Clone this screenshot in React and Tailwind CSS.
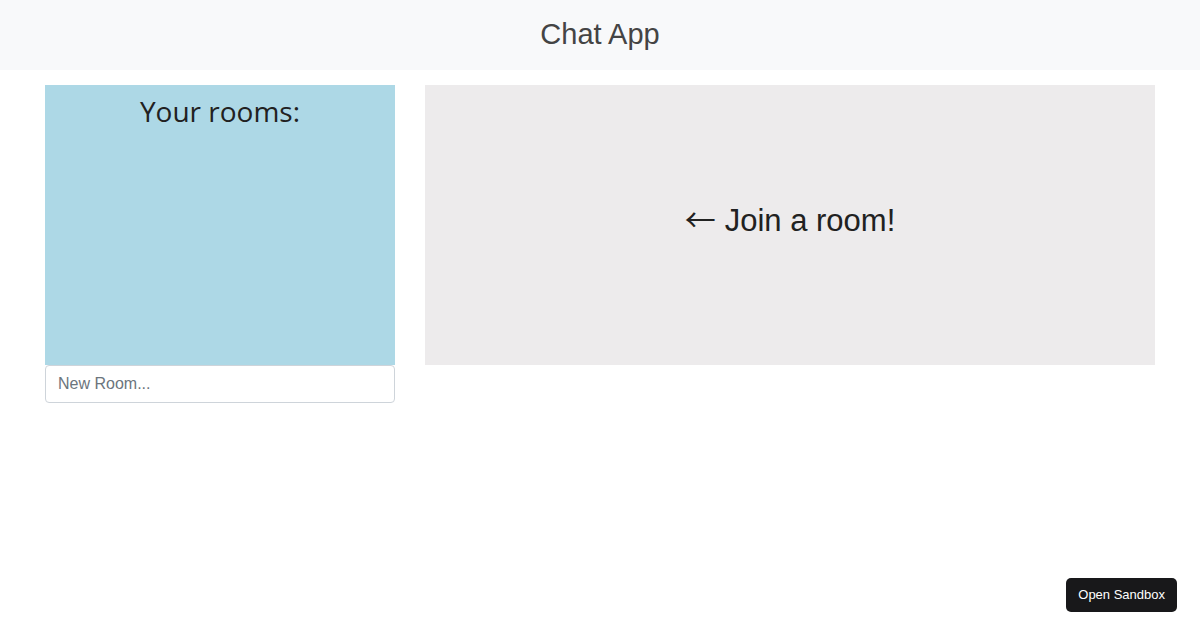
import React from "react";

const App = () => {
  return (
    <div className="min-h-[630px] bg-white font-['Liberation_Sans',Arial,sans-serif] text-[#212529]">
      <header className="h-[70px] bg-[#f8f9fa] flex items-center justify-center">
        <h1 className="text-[29px] leading-none text-[#444] pb-[2px]">Chat App</h1>
      </header>

      <main className="w-[1110px] mx-auto mt-[15px] flex gap-[30px]">
        {/* rooms column */}
        <div className="w-[350px] flex flex-col">
          <div className="h-[280px] bg-[#add8e6] pt-[8px]">
            <h2 className="text-center text-[28px] leading-[36px] text-[#212121] font-['Open_Sans',sans-serif]">
              Your rooms:
            </h2>
          </div>
          <input
            type="text"
            placeholder="New Room..."
            className="h-[38px] w-full border border-[#ced4da] rounded-[4px] px-3 text-base text-[#495057] placeholder:text-[#6c757d] outline-none"
          />
        </div>

        {/* chat area */}
        <div className="flex-1 h-[280px] bg-[#edebec] flex items-center justify-center">
          <p className="text-[31px] leading-none text-[#212121] pb-[12px] flex items-baseline">
            <span className="font-['Noto_Sans_CJK_SC',sans-serif] mr-[9px]">←</span>
            Join a room!
          </p>
        </div>
      </main>

      <button
        type="button"
        className="fixed right-[23px] bottom-[18px] h-[34px] px-[12px] rounded-[5px] bg-[#18181a] text-white text-[13px]"
      >
        Open Sandbox
      </button>
    </div>
  );
};

export default App;
